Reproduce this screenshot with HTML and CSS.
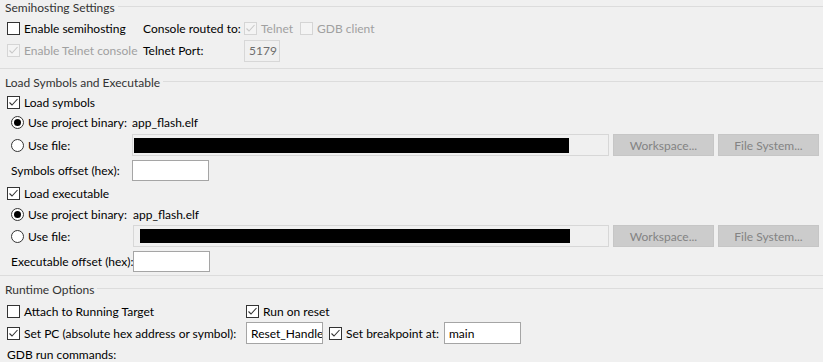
FILE: index.html
```html
<!DOCTYPE html>
<html lang="en">
<head>
  <meta charset="UTF-8" />
  <title>Debugger Startup</title>
  <link rel="stylesheet" href="styles.css">
</head>
<body>
  <div class="page">

    <section class="group group-semi">
      <div class="group-title"><span>Semihosting Settings</span></div>
      <div class="semi-grid">
        <label class="opt"><span class="check"></span>Enable semihosting</label>
        <span class="lbl">Console routed to:</span>
        <div class="inline">
          <label class="opt disabled"><span class="check"><svg viewBox="0 0 11 11"><path d="M1.5 5.5l2.5 2.5l5.5-6"/></svg></span>Telnet</label>
          <label class="opt disabled"><span class="check"></span>GDB client</label>
        </div>
        <label class="opt disabled"><span class="check"><svg viewBox="0 0 11 11"><path d="M1.5 5.5l2.5 2.5l5.5-6"/></svg></span>Enable Telnet console</label>
        <span class="lbl">Telnet Port:</span>
        <span class="field disabled port">5179</span>
      </div>
    </section>

    <section class="group group-load">
      <div class="group-title"><span>Load Symbols and Executable</span></div>
      <div class="load-grid">
        <label class="opt full"><span class="check"><svg viewBox="0 0 11 11"><path d="M1.5 5.5l2.5 2.5l5.5-6"/></svg></span>Load symbols</label>

        <label class="opt indent"><span class="radio on"></span>Use project binary:</label>
        <span class="value">app_flash.elf</span>

        <label class="opt indent"><span class="radio"></span>Use file:</label>
        <span class="field disabled path"><span class="redact"></span></span>
        <button class="btn" disabled>Workspace...</button>
        <button class="btn" disabled>File System...</button>

        <span class="lbl indent">Symbols offset (hex):</span>
        <span class="field offset"></span>

        <label class="opt full"><span class="check"><svg viewBox="0 0 11 11"><path d="M1.5 5.5l2.5 2.5l5.5-6"/></svg></span>Load executable</label>

        <label class="opt indent"><span class="radio on"></span>Use project binary:</label>
        <span class="value shift">app_flash.elf</span>

        <label class="opt indent"><span class="radio"></span>Use file:</label>
        <span class="field disabled path shift"><span class="redact redact-exec"></span></span>
        <button class="btn" disabled>Workspace...</button>
        <button class="btn" disabled>File System...</button>

        <span class="lbl indent">Executable offset (hex):</span>
        <span class="field offset shift"></span>
      </div>
    </section>

    <section class="group group-run">
      <div class="group-title"><span>Runtime Options</span></div>
      <div class="run-grid">
        <label class="opt"><span class="check"></span>Attach to Running Target</label>
        <label class="opt span-rest"><span class="check"><svg viewBox="0 0 11 11"><path d="M1.5 5.5l2.5 2.5l5.5-6"/></svg></span>Run on reset</label>

        <label class="opt"><span class="check"><svg viewBox="0 0 11 11"><path d="M1.5 5.5l2.5 2.5l5.5-6"/></svg></span>Set PC (absolute hex address or symbol):</label>
        <span class="field text">Reset_Handle</span>
        <label class="opt gap-left"><span class="check"><svg viewBox="0 0 11 11"><path d="M1.5 5.5l2.5 2.5l5.5-6"/></svg></span>Set breakpoint at:</label>
        <span class="field text">main</span>

        <span class="lbl full">GDB run commands:</span>
      </div>
    </section>

  </div>
</body>
</html>
```

FILE: styles.css
```css
body {
  font-family: Lato, "Noto Sans", sans-serif;
  font-size: 12px;
  background: #f0f0f0;
  color: #000;
  margin: 0;
  padding: 0;
}

.page {
  width: 823px;
  height: 362px;
  overflow: hidden;
}

.group {
  border-bottom: 1px solid #dcdcdc;
}

.group + .group {
  margin-top: 6px;
}

.group-title {
  display: flex;
  line-height: 15px;
  height: 15px;
  padding-left: 5px;
  color: #333;
}

.group-title::after {
  content: "";
  flex: 1;
  height: 1px;
  margin-top: 6px;
  margin-left: 3px;
  background: #dcdcdc;
}

/* semihosting */
.semi-grid {
  display: grid;
  grid-template-columns: 136px 101px auto;
  grid-template-rows: 21px 23px;
  align-items: center;
  padding: 3px 0 6px 7px;
}

.inline {
  display: flex;
  gap: 7px;
}

/* load symbols */
.load-grid {
  display: grid;
  grid-template-columns: 121px 477px 101px 101px;
  grid-template-rows: 20px 20px 26px 24px 22px 20px 24px 26px;
  column-gap: 4px;
  align-items: center;
  padding: 2px 0 1px 7px;
}

.load-grid > .indent {
  grid-column: 1;
}

/* runtime */
.group-run {
  border-bottom: none;
}

.run-grid {
  display: grid;
  grid-template-columns: 239px 77px 121px 77px;
  grid-template-rows: 21px 22px 20px;
  align-items: center;
  padding: 4px 0 0 7px;
}

.full {
  grid-column: 1 / -1;
}

.span-rest {
  grid-column: 2 / -1;
}

.gap-left {
  padding-left: 6px;
}

.indent {
  padding-left: 4px;
}

.shift {
  margin-left: 1px;
}

.opt {
  display: flex;
  align-items: center;
  gap: 4px;
  white-space: nowrap;
}

.lbl,
.value {
  white-space: nowrap;
}

.opt.disabled {
  color: #a0a0a0;
}

.check {
  width: 13px;
  height: 13px;
  box-sizing: border-box;
  border: 1px solid #333;
  background: #fff;
  display: flex;
  align-items: center;
  justify-content: center;
  flex: none;
}

.check svg {
  width: 11px;
  height: 11px;
  fill: none;
  stroke: #333;
  stroke-width: 1.1;
}

.opt.disabled .check {
  border-color: #d5d5d5;
  background: #f4f4f4;
}

.opt.disabled .check svg {
  stroke: #c8c8c8;
}

.radio {
  width: 13px;
  height: 13px;
  box-sizing: border-box;
  border: 1px solid #333;
  border-radius: 50%;
  background: #fff;
  display: flex;
  align-items: center;
  justify-content: center;
  flex: none;
}

.radio.on::after {
  content: "";
  width: 7px;
  height: 7px;
  border-radius: 50%;
  background: #000;
}

.field {
  height: 22px;
  box-sizing: border-box;
  border: 1px solid #a5a5a5;
  background: #fff;
  display: flex;
  align-items: center;
  padding: 0 4px;
  overflow: hidden;
  white-space: nowrap;
}

.field.disabled {
  background: #f0f0f0;
  border-color: #d7d7d7;
  color: #6d6d6d;
}

.port {
  width: 36px;
}

.path {
  padding: 0;
}

.offset {
  width: 77px;
  height: 21px;
}

.redact {
  display: block;
  width: 435px;
  height: 15px;
  margin-left: 1px;
  background: #000;
}

.redact-exec {
  width: 430px;
  height: 14px;
  margin-left: 6px;
}

.btn {
  height: 22px;
  border: 1px solid #c6c6c6;
  background: #cccccc;
  color: #838383;
  font-family: inherit;
  font-size: 12px;
  padding: 0;
}
```
